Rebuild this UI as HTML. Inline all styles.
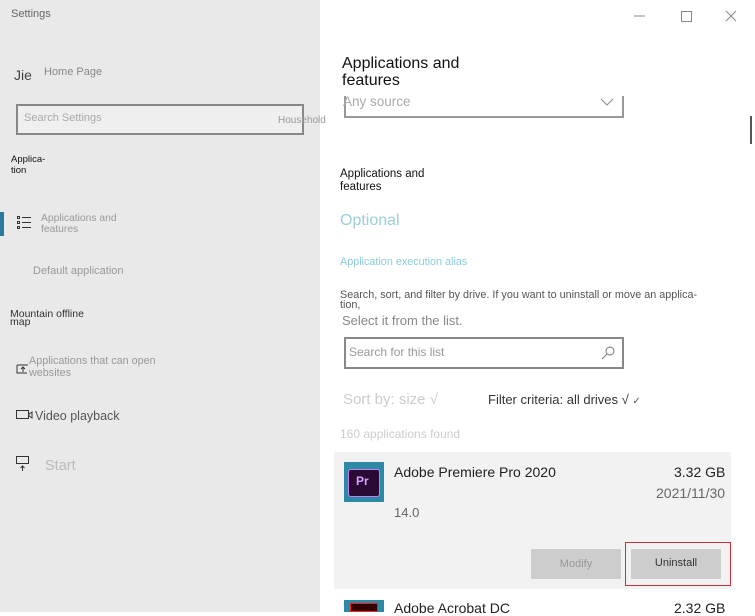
<!DOCTYPE html><html><head><style>
*{margin:0;padding:0;box-sizing:border-box}
body{width:755px;height:612px;overflow:hidden;font-family:"Liberation Sans",sans-serif;background:#fff;position:relative}
.a{position:absolute;white-space:nowrap}
#l{position:absolute;left:0;top:0;width:320px;height:612px;background:#e9e9e9}
</style></head><body>
<div id="l">
<div class="a" style="left:11px;top:8px;font-size:11px;color:#666">Settings</div>
<div class="a" style="left:14px;top:67px;font-size:14px;color:#444">Jie</div>
<div class="a" style="left:44px;top:66px;font-size:11px;color:#888">Home Page</div>
<div class="a" style="left:16px;top:104px;width:288px;height:31px;border:2px solid #888;background:#efefef"></div>
<div class="a" style="left:24px;top:112px;font-size:11px;color:#aaa">Search Settings</div>
<div class="a" style="left:278px;top:115px;font-size:10px;color:#999">Household</div>
<div class="a" style="left:11px;top:154px;font-size:9.5px;color:#111;line-height:11px;white-space:normal">Applica-<br>tion</div>
<div class="a" style="left:0;top:212px;width:4px;height:24px;background:#2a7aa0"></div>
<svg class="a" style="left:16px;top:215px" width="16" height="16"><g fill="none" stroke="#333" stroke-width="1"><rect x="1.5" y="1.5" width="2" height="2"/><rect x="1.5" y="6.5" width="2" height="2"/><rect x="1.5" y="11.5" width="2" height="2"/><path d="M6 2.5h9M6 7.5h9M6 12.5h9"/></g></svg>
<div class="a" style="left:41px;top:213px;font-size:10.3px;color:#999;line-height:11px">Applications and<br>features</div>
<div class="a" style="left:33px;top:265px;font-size:11px;color:#999">Default application</div>
<div class="a" style="left:10px;top:310px;font-size:10.5px;color:#333;line-height:8px">Mountain offline<br>map</div>
<svg class="a" style="left:16px;top:362px" width="16" height="14"><path d="M1 3v8h10M1 3h11" fill="none" stroke="#333"/><path d="M7 10V5M5 7l2-2 2 2" fill="none" stroke="#333"/></svg>
<div class="a" style="left:29px;top:355px;font-size:10.8px;color:#999;line-height:12px">Applications that can open<br>websites</div>
<svg class="a" style="left:16px;top:410px" width="17" height="10"><rect x=".5" y=".5" width="12" height="8" fill="none" stroke="#333"/><path d="M13 4l3-2v6l-3-2z" fill="none" stroke="#333"/></svg>
<div class="a" style="left:35px;top:409px;font-size:12.5px;color:#555">Video playback</div>
<svg class="a" style="left:16px;top:456px" width="14" height="16"><rect x=".5" y=".5" width="12" height="7" fill="none" stroke="#333"/><path d="M6.5 15V10M4.5 12l2-2 2 2" fill="none" stroke="#333"/></svg>
<div class="a" style="left:45px;top:458px;font-size:14.5px;color:#bbb">Start</div>
</div>
<svg class="a" style="left:630px;top:8px" width="115" height="16"><path d="M4 8h11" stroke="#888"/><rect x="51.5" y="3.5" width="10" height="10" fill="none" stroke="#888"/><path d="M96 3l10 10M106 3l-10 10" stroke="#888"/></svg>
<div class="a" style="left:750px;top:116px;width:2px;height:28px;background:#555"></div>
<div class="a" style="left:342px;top:55px;font-size:16px;color:#111;line-height:17px">Applications and<br>features</div>
<div class="a" style="left:344px;top:96px;width:280px;height:22px;border:2px solid #999;border-top:none"></div>
<div class="a" style="left:343px;top:94px;font-size:13.5px;color:#aaa">Any source</div>
<svg class="a" style="left:600px;top:98px" width="14" height="9"><path d="M1 1l6 6 6-6" fill="none" stroke="#888"/></svg>
<div class="a" style="left:340px;top:168px;font-size:11.5px;color:#111;line-height:13px">Applications and<br>features</div>
<div class="a" style="left:340px;top:212px;font-size:16px;color:#9ccfd8">Optional</div>
<div class="a" style="left:340px;top:256px;font-size:10.8px;color:#8ccbd8">Application execution alias</div>
<div class="a" style="left:340px;top:290px;font-size:10.8px;color:#555;line-height:10px">Search, sort, and filter by drive. If you want to uninstall or move an applica-<br>tion,</div>
<div class="a" style="left:342px;top:313px;font-size:13px;color:#888">Select it from the list.</div>
<div class="a" style="left:344px;top:337px;width:280px;height:32px;border:2px solid #888"></div>
<div class="a" style="left:349px;top:345px;font-size:12px;color:#999">Search for this list</div>
<svg class="a" style="left:601px;top:346px" width="14" height="14"><circle cx="9" cy="5" r="4" fill="none" stroke="#777"/><path d="M6 8l-5 5" stroke="#777"/></svg>
<div class="a" style="left:343px;top:391px;font-size:15px;color:#ccc">Sort by: size √</div>
<div class="a" style="left:488px;top:392px;font-size:13px;color:#333">Filter criteria: all drives √ <span style="font-size:10px;color:#555">✓</span></div>
<div class="a" style="left:340px;top:427px;font-size:12px;color:#ccc">160 applications found</div>
<div class="a" style="left:334px;top:452px;width:397px;height:137px;background:#f2f2f2"></div>
<div class="a" style="left:344px;top:462px;width:40px;height:40px;background:#2d8aa6"></div>
<div class="a" style="left:348px;top:469px;width:32px;height:28px;background:#2a0a33;border:1.5px solid #c57ef0;border-radius:3px;color:#d9a2ff;font-size:12px;font-weight:bold;padding:4px 0 0 7px">Pr</div>
<div class="a" style="left:394px;top:464px;font-size:14px;color:#222">Adobe Premiere Pro 2020</div>
<div class="a" style="left:674px;top:464px;font-size:14px;color:#222">3.32 GB</div>
<div class="a" style="left:656px;top:485px;font-size:14px;color:#666">2021/11/30</div>
<div class="a" style="left:394px;top:505px;font-size:13px;color:#666">14.0</div>
<div class="a" style="left:531px;top:549px;width:90px;height:30px;background:#cdcdcd;color:#999;font-size:11px;text-align:center;line-height:30px">Modify</div>
<div class="a" style="left:625px;top:542px;width:106px;height:44px;border:1px solid #c4333b"></div>
<div class="a" style="left:631px;top:549px;width:90px;height:30px;background:#cdcdcd;color:#333;font-size:11px;text-align:center;line-height:29px">Uninstall</div>
<div class="a" style="left:344px;top:600px;width:40px;height:12px;background:#2d8aa6"><div style="margin:3px 0 0 6px;width:28px;height:9px;background:#300;border:1.5px solid #e22"></div></div>
<div class="a" style="left:394px;top:600px;font-size:14px;color:#222">Adobe Acrobat DC</div>
<div class="a" style="left:674px;top:600px;font-size:14px;color:#222">2.32 GB</div>
</body></html>
